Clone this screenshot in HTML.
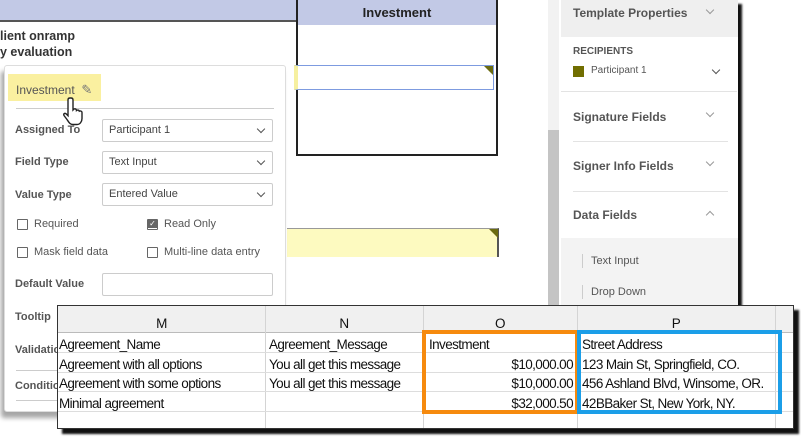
<!DOCTYPE html>
<html><head><meta charset="utf-8"><style>
*{box-sizing:border-box;margin:0;padding:0}
body{width:801px;height:438px;position:relative;overflow:hidden;background:#fff;font-family:"Liberation Sans",sans-serif;color:#333}
.a{position:absolute}
.lbl{position:absolute;left:15px;font-size:11px;font-weight:bold;color:#555}
.sel{position:absolute;left:102px;width:171px;height:23px;border:1px solid #ccc;border-radius:2px;font-size:11px;color:#444;padding:4px 6px}
.dd:after{content:"";position:absolute;right:8px;top:6px;width:5px;height:5px;border-right:1.5px solid #555;border-bottom:1.5px solid #555;transform:rotate(45deg)}
.cb{position:absolute;font-size:11px;color:#555;padding-left:19px}
.cb:before{content:"";position:absolute;left:2px;top:1px;width:9px;height:9px;border:1.5px solid #666;border-radius:1px}
.rp{position:absolute;left:573px;font-size:12px;font-weight:bold;color:#555}
.chev{position:absolute;left:707px;width:6px;height:6px;border-right:1.3px solid #999;border-bottom:1.3px solid #999;transform:rotate(45deg)}
.hl{position:absolute;left:561px;width:176px;height:1px;background:#e3e3e3}
.ss{font-size:13.5px;color:#111;font-family:"Liberation Sans",sans-serif;letter-spacing:-0.6px}
</style></head><body>
<div class="a" style="left:0;top:0;width:297px;height:22px;background:#c2c9e6;border-bottom:2px solid #555;border-right:1px solid #555"></div>
<div class="a" style="left:296px;top:0;width:202px;height:156px;border:2px solid #222;border-top:none"></div>
<div class="a" style="left:298px;top:0;width:198px;height:25px;background:#c2c9e6;font-weight:bold;font-size:13px;color:#222;text-align:center;line-height:26px">Investment</div>
<div class="a" style="left:0;top:28px;font-size:12.5px;font-weight:bold;color:#333;line-height:16px">lient onramp<br>y evaluation</div>
<div class="a" style="left:294px;top:65px;width:200px;height:25px;border:1px solid #7d9be0;border-left:4px solid #f6f0a0"></div>
<div class="a" style="left:484px;top:66px;width:0;height:0;border-top:9px solid #6b6b10;border-left:9px solid transparent"></div>
<div class="a" style="left:287px;top:228px;width:212px;height:29px;background:#fdfac0;border-top:1px solid #999;border-right:2px solid #555"></div>
<div class="a" style="left:489px;top:229px;border-top:9px solid #6b6b10;border-left:9px solid transparent"></div>
<div class="a" style="left:4px;top:65px;width:282px;height:347px;background:#fff;border:1px solid #ddd;border-radius:3px;box-shadow:-3px 6px 5px rgba(0,0,0,.35)"></div>
<div class="a" style="left:8px;top:74px;width:93px;height:27px;background:#faf0a0;font-size:12px;color:#555;padding:8px 0 0 8px">Investment&nbsp; <span style="font-size:13px;color:#777">✎</span></div>
<div class="a" style="left:16px;top:108px;width:258px;height:1px;background:#ccc"></div>
<svg class="a" style="left:58px;top:95px" width="34" height="34" viewBox="0 0 34 34"><path d="M13 3c1.5 0 2 1 2 2v10l1-1c1.5-.5 2.5.3 2.5 1.5 1-.8 2.5-.5 2.8.7 1-.6 2.7 0 2.7 1.3v6c0 3-2 6-5 6h-4c-3 0-4-2-6-5l-3-4c-.8-1.5.5-2.7 2-1.8l2 2V5c0-1 .5-2 2-2z" fill="#fff" stroke="#222" stroke-width="1.4"/></svg>
<div class="lbl" style="top:124px">Assigned To</div><div class="sel dd" style="top:119px">Participant 1</div>
<div class="lbl" style="top:156px">Field Type</div><div class="sel dd" style="top:151px">Text Input</div>
<div class="lbl" style="top:189px">Value Type</div><div class="sel dd" style="top:183px">Entered Value</div>
<div class="cb" style="left:15px;top:218px">Required</div>
<div class="cb" style="left:145px;top:218px">Read Only<span class="a" style="left:3px;top:2px;width:9px;height:8px;background:#666;color:#fff;font-size:8px;line-height:8px;text-align:center">✓</span></div>
<div class="cb" style="left:15px;top:246px">Mask field data</div>
<div class="cb" style="left:145px;top:246px">Multi-line data entry</div>
<div class="lbl" style="top:278px">Default Value</div><div class="sel" style="top:273px"></div>
<div class="lbl" style="top:311px">Tooltip</div>
<div class="lbl" style="top:344px">Validation</div>
<div class="a" style="left:16px;top:370px;width:50px;height:1px;background:#ccc"></div>
<div class="lbl" style="top:380px">Condition</div>
<div class="a" style="left:16px;top:400px;width:50px;height:1px;background:#ccc"></div>
<div class="a" style="left:548px;top:130px;width:11px;height:175px;background:#c4c4c4"></div>
<div class="a" style="left:548px;top:0;width:11px;height:130px;background:#f2f2f2"></div>
<div class="a" style="left:561px;top:0;width:177px;height:310px;background:#fff;box-shadow:4px 4px 2px #111"></div>
<div class="a" style="left:561px;top:0;width:177px;height:37px;background:#efefef"></div>
<div class="rp" style="top:6px">Template Properties</div><div class="chev" style="top:7px"></div>
<div class="a" style="left:573px;top:46px;font-size:10px;font-weight:bold;color:#555">RECIPIENTS</div>
<div class="a" style="left:573px;top:66px;width:11px;height:11px;background:#716e00"></div>
<div class="a" style="left:591px;top:65px;font-size:10px;color:#555">Participant 1</div>
<div class="chev" style="left:713px;top:67px;border-color:#555"></div>
<div class="hl" style="top:91px"></div>
<div class="rp" style="top:110px">Signature Fields</div><div class="chev" style="top:110px"></div>
<div class="hl" style="left:573px;width:155px;top:141px"></div>
<div class="rp" style="top:159px">Signer Info Fields</div><div class="chev" style="top:159px"></div>
<div class="hl" style="left:573px;width:155px;top:191px"></div>
<div class="rp" style="top:208px">Data Fields</div><div class="chev" style="top:212px;transform:rotate(-135deg)"></div>
<div class="a" style="left:561px;top:238px;width:177px;height:72px;background:#f3f3f3"></div>
<div class="a" style="left:582px;top:254px;width:1px;height:14px;background:#ccc"></div>
<div class="a" style="left:591px;top:255px;font-size:11px;color:#555">Text Input</div>
<div class="a" style="left:582px;top:285px;width:1px;height:14px;background:#ccc"></div>
<div class="a" style="left:591px;top:286px;font-size:11px;color:#555">Drop Down</div>
<div class="a" style="left:57px;top:305px;width:737px;height:124px;background:#fff;border:1px solid #333;box-shadow:5px 5px 2px #111"></div>
<div class="a" style="left:58px;top:306px;width:735px;height:27px;background:#f0f0f0;border-bottom:1px solid #bbb"></div>
<div class="a" style="left:265px;top:306px;width:1px;height:122px;background:#d4d4d4"></div>
<div class="a" style="left:423px;top:306px;width:1px;height:122px;background:#d4d4d4"></div>
<div class="a" style="left:577px;top:306px;width:1px;height:122px;background:#d4d4d4"></div>
<div class="a" style="left:775px;top:306px;width:1px;height:122px;background:#d4d4d4"></div>
<div class="a" style="left:58px;top:352px;width:735px;height:1px;background:#ddd"></div>
<div class="a" style="left:58px;top:372px;width:735px;height:1px;background:#ddd"></div>
<div class="a" style="left:58px;top:391px;width:735px;height:1px;background:#ddd"></div>
<div class="a" style="left:58px;top:411px;width:735px;height:1px;background:#ddd"></div>
<div class="a ss" style="left:58px;top:316px;width:207px;text-align:center">M</div>
<div class="a ss" style="left:265px;top:316px;width:158px;text-align:center">N</div>
<div class="a ss" style="left:423px;top:316px;width:154px;text-align:center">O</div>
<div class="a ss" style="left:577px;top:316px;width:198px;text-align:center">P</div>
<div class="a ss" style="left:59px;top:335px;line-height:19.5px">Agreement_Name<br>Agreement with all options<br>Agreement with some options<br>Minimal agreement</div>
<div class="a ss" style="left:269px;top:335px;line-height:19.5px">Agreement_Message<br>You all get this message<br>You all get this message</div>
<div class="a ss" style="left:429px;top:335px;line-height:19.5px">Investment</div>
<div class="a ss" style="left:423px;top:335px;width:150px;text-align:right;line-height:19.5px"><br>$10,000.00<br>$10,000.00<br>$32,000.50</div>
<div class="a ss" style="left:582px;top:335px;line-height:19.5px">Street Address<br>123 Main St, Springfield, CO.<br>456 Ashland Blvd, Winsome, OR.<br>42BBaker St, New York, NY.</div>
<div class="a" style="left:422px;top:330px;width:157px;height:84px;border:4px solid #f68a0e"></div>
<div class="a" style="left:577px;top:330px;width:205px;height:84px;border:4px solid #1b9ee8"></div>
</body></html>
